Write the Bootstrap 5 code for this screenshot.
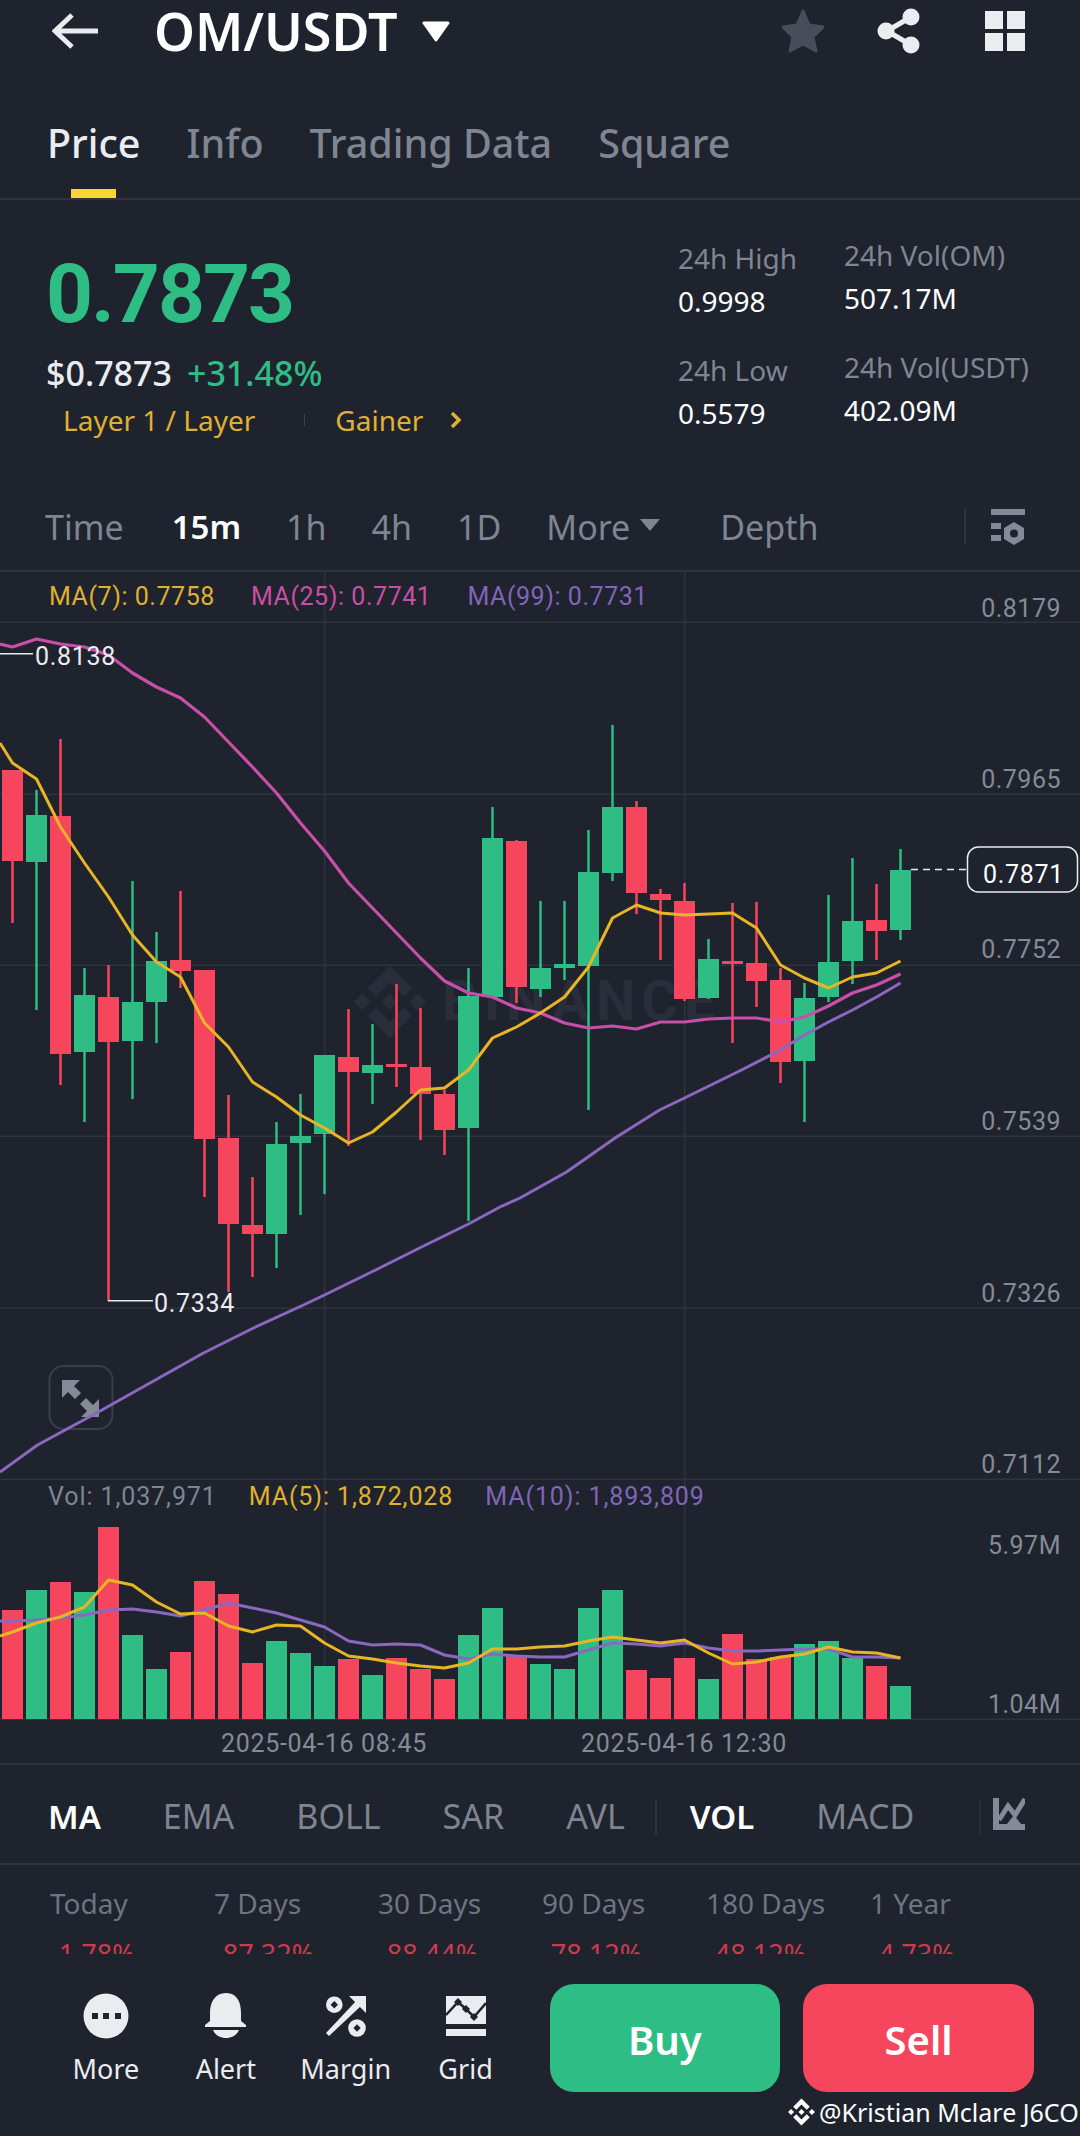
<!DOCTYPE html>
<html lang="en">
<head>
  <meta charset="UTF-8">
  <title>OM/USDT</title>
  <meta name="viewport" content="width=device-width, initial-scale=1">
  <link href="https://cdn.jsdelivr.net/npm/bootstrap@5.3.0/dist/css/bootstrap.min.css" rel="stylesheet">
  <style>
    :root {
      --bg: #1e232e;
      --line: #2e333e;
      --up: #2ebd85;
      --down: #f6465d;
      --gold: #e0b030;
      --pink: #c94fa6;
      --violet: #8264b8;
      --muted: #7f8591;
      --soft: #eaecef;
    }
    body {
      background: var(--bg);
      color: var(--soft);
      font-family: "Noto Sans", sans-serif;
      width: 1080px;
      height: 2136px;
      overflow: hidden;
      position: relative;
    }
    .top-bar { height: 62px; padding: 0 55px 0 52px; }
    .top-title { font-size: 52px; font-weight: 600; line-height: 60px; color: #fff; margin-left: 56px; }
    .ico-share { margin-left: 51px; }
    .ico-tiles { margin-left: 64px; }
    .tab-row { height: 138px; border-bottom: 2px solid var(--line); padding: 54px 0 0 47px; gap: 46px; position: relative; }
    .tab-item { font-size: 39.5px; line-height: 54px; color: var(--muted); font-weight: 500; }
    .tab-item.on { color: var(--soft); }
    .tab-mark { position: absolute; left: 71px; bottom: 0; width: 45px; height: 9px; background: #fcd535; }
    .stats { height: 280px; }
    .stats-left { width: 678px; padding: 50px 0 0 46px; }
    .big-price { font-family: Roboto, sans-serif; font-size: 82px; font-weight: 700; line-height: 88px; color: var(--up); letter-spacing: -2px; }
    .sub-price { font-size: 34px; font-weight: 500; line-height: 46px; margin-top: 12px; }
    .sub-price span { color: var(--up); margin-left: 15px; }
    .tags { font-size: 28px; line-height: 40px; color: var(--gold); padding-left: 17px; margin-top: 4px; }
    .tag-sep { width: 1px; height: 12px; background: #3a3f49; margin: 0 30px 0 49px; }
    .tag-arrow { margin-left: 27px; }
    .stat-col { width: 166px; padding-top: 39px; }
    .stat-col.shift { padding-top: 36px; }
    .stat-label { font-size: 28px; line-height: 38px; color: var(--muted); white-space: nowrap; }
    .stat-val { font-size: 28px; line-height: 38px; margin-top: 5px; margin-bottom: 31px; color: #fff; white-space: nowrap; }
    .time-row { height: 90px; padding: 4px 0 0 45px; gap: 45px; font-size: 34px; color: var(--muted); }
    .time-row .on { color: #fff; font-weight: 600; font-size: 33px; margin-left: 3px; }
    .tri { width: 22px; height: 14px; margin-left: 9px; margin-bottom: 4px; }
    .depth-item { margin-left: 14px; }
    .v-sep { width: 2px; height: 36px; background: var(--line); }
    .time-sep { margin-left: 101px; }
    .time-ico { margin-left: -21px; }
    .chart-wrap { position: relative; height: 1193px; border-top: 2px solid var(--line); }
    .chart-svg { display: block; position: absolute; left: 0; top: -2px; }
    .chart-legend { position: absolute; left: 49px; font-family: Roboto, sans-serif; font-size: 25px; line-height: 30px; white-space: nowrap; gap: 36px; letter-spacing: .55px; }
    .legend-top { top: 10px; }
    .legend-vol { top: 910px; left: 48px; gap: 32px; letter-spacing: .9px; }
    .ink-muted { color: var(--muted); }
    .ink-gold { color: var(--gold); }
    .ink-pink { color: var(--pink); }
    .ink-violet { color: var(--violet); }
    .ind-row { height: 102px; border-top: 2px solid var(--line); border-bottom: 2px solid var(--line); padding: 5px 0 0 48px; gap: 62px; font-size: 34px; color: var(--muted); font-weight: 400; }
    .ind-row .on { color: #fff; font-weight: 600; font-size: 33px; }
    .ind-sep-a { margin: 0 -29px 0 -32px; }
    .ind-sep-b { opacity: .6; margin-left: 3px; }
    .ind-ico { margin: -6px 0 0 -50px; }
    .perf { height: 89px; overflow: hidden; padding: 19px 0 0 50px; }
    .perf-col { width: 164px; }
    .perf-label { font-size: 28px; line-height: 38px; color: #6e7480; white-space: nowrap; }
    .perf-val { font-size: 27px; line-height: 36px; margin-top: 14px; color: #cf3a50; white-space: nowrap; }
    .bottom-bar { height: 182px; padding: 30px 46px 0 46px; }
    .act-item { width: 120px; font-size: 27px; line-height: 36px; color: var(--soft); text-align: center; padding-top: 9px; }
    .act-icon { height: 46px; margin-bottom: 12px; }
    .act-btn { width: 231px; height: 108px; border-radius: 24px; border: 0; color: #fff; font-size: 40px; font-weight: 600; padding: 3px 0 0; }
    .act-buy { background: var(--up); margin-left: 24px; margin-right: 23px; }
    .act-sell { background: var(--down); }
    .credit { position: absolute; left: 788px; top: 2095px; font-size: 25px; line-height: 34px; color: #fff; white-space: nowrap; gap: 4px; }
  </style>
</head>
<body>
  <div class="top-bar d-flex align-items-center">
    <svg width="46" height="36" viewBox="0 0 46 36"><path d="M20 2 3 18l17 16M3 18h43" fill="none" stroke="#eaecef" stroke-width="5"/></svg>
    <div class="top-title">OM/USDT</div>
    <svg class="ms-4" width="28" height="21" viewBox="0 0 28 21"><path d="M2 2h24L14 19z" fill="#fff" stroke="#fff" stroke-width="3" stroke-linejoin="round"/></svg>
    <div class="ms-auto d-flex align-items-center">
      <svg width="46" height="46" viewBox="0 0 46 46"><path d="M23 3l6 14 14 2-10 10 3 14-13-7-13 7 3-14L3 19l14-2z" fill="#474d59" stroke="#474d59" stroke-width="3" stroke-linejoin="round"/></svg>
      <svg class="ico-share" width="44" height="46" viewBox="0 0 44 46"><path d="M10 23 34 9M10 23l24 14" stroke="#eaecef" stroke-width="5"/><circle cx="34" cy="9" r="8.5" fill="#eaecef"/><circle cx="34" cy="37" r="8.5" fill="#eaecef"/><circle cx="9" cy="23" r="8.5" fill="#eaecef"/></svg>
      <svg class="ico-tiles" width="40" height="40" viewBox="0 0 40 40"><path d="M0 0h18v18H0zM22 0h18v18H22zM0 22h18v18H0zM22 22h18v18H22z" fill="#eaecef"/></svg>
    </div>
  </div>

  <div class="tab-row d-flex">
    <div class="tab-item on">Price</div>
    <div class="tab-item">Info</div>
    <div class="tab-item">Trading Data</div>
    <div class="tab-item">Square</div>
    <div class="tab-mark"></div>
  </div>

  <div class="stats d-flex">
    <div class="stats-left">
      <div class="big-price">0.7873</div>
      <div class="sub-price">$0.7873<span>+31.48%</span></div>
      <div class="tags d-flex align-items-center">
        <div>Layer 1 / Layer</div>
        <div class="tag-sep"></div>
        <div>Gainer</div>
        <svg class="tag-arrow" width="12" height="18" viewBox="0 0 12 18"><path d="M2 2l7 7-7 7" fill="none" stroke="#e0b030" stroke-width="3.5"/></svg>
      </div>
    </div>
    <div class="stat-col">
      <div class="stat-label">24h High</div>
      <div class="stat-val">0.9998</div>
      <div class="stat-label">24h Low</div>
      <div class="stat-val">0.5579</div>
    </div>
    <div class="stat-col shift">
      <div class="stat-label">24h Vol(OM)</div>
      <div class="stat-val">507.17M</div>
      <div class="stat-label">24h Vol(USDT)</div>
      <div class="stat-val">402.09M</div>
    </div>
  </div>

  <div class="time-row d-flex align-items-center">
    <div>Time</div>
    <div class="on">15m</div>
    <div>1h</div>
    <div>4h</div>
    <div>1D</div>
    <div class="d-flex align-items-center">More<svg class="tri" viewBox="0 0 22 14"><path d="M1 1h20L11 13z" fill="#7f8591"/></svg></div>
    <div class="depth-item">Depth</div>
    <div class="v-sep time-sep"></div>
    <svg class="time-ico" width="36" height="36" viewBox="0 0 36 36"><path d="M1 0h34v6H1zM1 14h10v6H1zM1 26h10v6H1z" fill="#848a97"/><path d="M24 13l10 6v11l-10 6-10-6V19z" fill="#848a97"/><circle cx="24" cy="24.500" r="4" fill="#1e232e"/></svg>
  </div>

  <div class="chart-wrap">
    <svg class="chart-svg" id="chart" width="1080" height="1195" viewBox="0 570 1080 1195"></svg>
    <div class="chart-legend legend-top d-flex">
      <span class="ink-gold">MA(7): 0.7758</span>
      <span class="ink-pink">MA(25): 0.7741</span>
      <span class="ink-violet">MA(99): 0.7731</span>
    </div>
    <div class="chart-legend legend-vol d-flex">
      <span class="ink-muted">Vol: 1,037,971</span>
      <span class="ink-gold">MA(5): 1,872,028</span>
      <span class="ink-violet">MA(10): 1,893,809</span>
    </div>
  </div>

  <div class="ind-row d-flex align-items-center">
    <div class="on">MA</div>
    <div>EMA</div>
    <div>BOLL</div>
    <div>SAR</div>
    <div>AVL</div>
    <div class="v-sep ind-sep-a"></div>
    <div class="on">VOL</div>
    <div>MACD</div>
    <div class="v-sep ind-sep-b"></div>
    <svg class="ind-ico" width="32" height="32" viewBox="0 0 32 32"><path d="M0 0h6v26h26v6H0z" fill="#848a97"/><path d="M6 22 15 8l7 9 10-16" fill="none" stroke="#848a97" stroke-width="5"/><path d="M14 26l7-9 7 9z" fill="#848a97"/></svg>
  </div>

  <div class="perf d-flex">
    <div class="perf-col"><div class="perf-label">Today</div><div class="perf-val">-1.78%</div></div>
    <div class="perf-col"><div class="perf-label">7 Days</div><div class="perf-val">-87.32%</div></div>
    <div class="perf-col"><div class="perf-label">30 Days</div><div class="perf-val">-88.44%</div></div>
    <div class="perf-col"><div class="perf-label">90 Days</div><div class="perf-val">-78.12%</div></div>
    <div class="perf-col"><div class="perf-label">180 Days</div><div class="perf-val">-48.12%</div></div>
    <div class="perf-col"><div class="perf-label">1 Year</div><div class="perf-val">-4.73%</div></div>
  </div>

  <div class="bottom-bar d-flex align-items-start">
    <div class="act-item">
      <svg class="act-icon" width="46" height="46" viewBox="0 0 46 46"><circle cx="23" cy="23" r="22.500" fill="#eaecef"/><path d="M9 20h6v6H9zM20 20h6v6h-6zM32 20h6v6h-6z" fill="#1e232e"/></svg>
      <div>More</div>
    </div>
    <div class="act-item">
      <svg class="act-icon" width="42" height="46" viewBox="0 0 42 46"><path d="M21 0C32 0 36 9 36 20v8l5 4v2H0v-2l5-4v-8C5 9 10 0 21 0z" fill="#eaecef"/><path d="M8 37h26c-2 5-7 8-13 8S10 42 8 37z" fill="#eaecef"/></svg>
      <div>Alert</div>
    </div>
    <div class="act-item">
      <svg class="act-icon" width="40" height="46" viewBox="0 -3 40 46"><path d="M23 0h17v17zM3 40l-3-3L31 4l5 5z" fill="#eaecef"/><circle cx="8.300" cy="8.700" r="8.300" fill="#eaecef"/><circle cx="31" cy="32" r="8.800" fill="#eaecef"/><path d="M8.300 5l3.700 3.700-3.700 3.700-3.700-3.700zM31 28.300l3.700 3.700-3.700 3.700-3.700-3.700z" fill="#1e232e"/></svg>
      <div>Margin</div>
    </div>
    <div class="act-item">
      <svg class="act-icon" width="40" height="46" viewBox="0 -3 40 46"><path d="M0 0h40v28H0zM0 33h40v7H0z" fill="#eaecef"/><path d="M0 19 12 6l8 7 8 8 12-14" fill="none" stroke="#1e232e" stroke-width="2.500"/><path d="M12 2l4 4-4 4-4-4zM20 9l4 4-4 4-4-4zM28 17l4 4-4 4-4-4z" fill="#1e232e"/></svg>
      <div>Grid</div>
    </div>
    <button class="act-btn act-buy btn">Buy</button>
    <button class="act-btn act-sell btn">Sell</button>
  </div>

  <div class="credit d-flex align-items-center">
    <svg width="27" height="28" viewBox="0 0 24 24"><path fill="#fff" d="M16.624 13.92l2.717 2.716-7.353 7.353-7.353-7.352 2.717-2.717 4.636 4.66 4.636-4.66zm4.637-4.636L24 12l-2.715 2.716L18.568 12l2.693-2.716zm-9.272.001l2.716 2.691-2.716 2.718L9.272 12l2.716-2.715zm-9.272-.001L5.409 12l-2.692 2.692L0 12l2.716-2.716zM11.989.012l7.353 7.329-2.717 2.715-4.636-4.636-4.636 4.66-2.717-2.715 7.353-7.353z"/></svg>
    <div>@Kristian Mclare J6CO</div>
  </div>

  <script>
    // candle data in page pixels: up?, wick top, body top, body bottom, wick bottom
    var candles = [
      [0,770,770,861,923],[1,790,815,862,1010],[0,739,816,1054,1085],[1,968,995,1052,1122],[0,965,997,1042,1301],
      [1,881,1002,1041,1099],[1,932,961,1002,1043],[0,891,960,971,988],[0,970,970,1139,1197],[0,1095,1138,1224,1292],
      [0,1177,1225,1234,1277],[1,1122,1144,1234,1268],[1,1094,1136,1143,1215],[1,1055,1055,1134,1194],[0,1009,1057,1072,1146],
      [1,1024,1065,1073,1104],[0,984,1064,1067,1087],[0,1008,1067,1094,1140],[0,1090,1094,1130,1155],[1,968,996,1128,1221],
      [1,807,838,997,997],[0,840,841,987,1003],[1,901,968,989,997],[1,901,964,968,980],[1,830,872,966,1110],
      [1,725,807,873,881],[0,801,807,893,914],[0,889,894,900,960],[0,883,901,999,1001],[1,939,959,998,999],
      [0,903,961,964,1043],[0,902,963,981,1007],[0,968,980,1062,1083],[1,983,998,1061,1122],[1,895,962,997,1002],
      [1,858,921,961,984],[0,884,920,931,960],[1,849,870,930,940]
    ];
    // volume bars: top edge in page pixels, same colour order as candles
    var volTop = [1610,1590,1582,1592,1527,1635,1669,1652,1581,1594,1663,1641,1653,1666,1659,1675,1658,1669,1679,1635,1608,1655,1664,1669,1608,1590,1670,1678,1658,1679,1634,1659,1657,1644,1641,1658,1666,1686];
    var ma25 = [0,644,12.5,647,36.5,639,60.5,644,84.500,647,108.500,655,132.500,673,156.500,687,180.500,698,204.500,717,228.500,742,252.500,767,276.500,793,300.500,823,324.500,851,348.500,883,372.500,908,396.500,933,420.500,958,444.500,981,468.500,993,492.500,997,516.500,1008,540.500,1013,564.500,1023,588.500,1028,612.500,1026,636.500,1029,660.500,1022,684.500,1022,708.500,1019,732.500,1018,756.500,1018,780.500,1022,804.500,1017,828.500,1006,852.500,993,876.500,985,900.500,974];
    var ma7 = [0,743,12.5,763,36.5,779,60.5,827,84.500,863,108.500,897,132.500,935,156.500,962,180.500,977,204.500,1023,228.500,1047,252.500,1082,276.500,1097,300.500,1115,324.500,1128,348.500,1143,372.500,1132,396.500,1112,420.500,1090,444.500,1088,468.500,1070,492.500,1038,516.500,1027,540.500,1013,564.500,997,588.500,967,612.500,918,636.500,905,660.500,913,684.500,915,708.500,914,732.500,913,756.500,928,780.500,965,804.500,978,828.500,988,852.500,977,876.500,973,900.500,961];
    var ma99 = [0,1472,37.5,1445,96.5,1413,178.500,1367,203.500,1353,253.500,1328,303.500,1305,324.500,1295,371.500,1272,421.500,1247,468.500,1224,500,1207,520,1198,566.500,1172,616.500,1137,659.500,1110,684.500,1098,741.500,1070,780.500,1050,804.500,1035,828.500,1022,852.500,1010,876.500,997,900.500,983];
    var vol5 = [0,1636,12.5,1632,36.5,1623,60.5,1617,84.500,1607,108.500,1580,132.500,1585,156.500,1602,180.500,1614,204.500,1613,228.500,1626,252.500,1632,276.500,1625,300.500,1626,324.500,1643,348.500,1656,372.500,1659,396.500,1663,420.500,1666,444.500,1668,468.500,1663,492.500,1649,516.500,1649,540.500,1647,564.500,1646,588.500,1641,612.500,1637,636.500,1640,660.500,1643,684.500,1640,708.500,1653,732.500,1664,756.500,1662,780.500,1657,804.500,1654,828.500,1647,852.500,1652,876.500,1653,900.500,1658];
    var vol10 = [0,1621,12.5,1621,36.5,1620,60.5,1618,84.500,1615,108.500,1610,132.500,1609,156.500,1612,180.500,1616,204.500,1610,228.500,1603,252.500,1608,276.500,1613,300.500,1620,324.500,1627,348.500,1641,372.500,1645,396.500,1644,420.500,1645,444.500,1655,468.500,1659,492.500,1654,516.500,1656,540.500,1657,564.500,1657,588.500,1650,612.500,1643,636.500,1644,660.500,1646,684.500,1643,708.500,1648,732.500,1651,756.500,1651,780.500,1650,804.500,1649,828.500,1649,852.500,1657,876.500,1657,900.500,1658];

    var logo = 'M16.624 13.92l2.717 2.716-7.353 7.353-7.353-7.352 2.717-2.717 4.636 4.66 4.636-4.66zm4.637-4.636L24 12l-2.715 2.716L18.568 12l2.693-2.716zm-9.272.001l2.716 2.691-2.716 2.718L9.272 12l2.716-2.715zm-9.272-.001L5.409 12l-2.692 2.692L0 12l2.716-2.716zM11.989.012l7.353 7.329-2.717 2.715-4.636-4.636-4.636 4.66-2.717-2.715 7.353-7.353z';
    var grid = '#2e333e', green = '#2ebd85', red = '#f6465d', out = '';

    function rect(x, y, w, h, fill) {
      out += '<rect x="' + x + '" y="' + y + '" width="' + w + '" height="' + h + '" fill="' + fill + '"/>';
    }
    function line(pts, color, w) {
      var p = '';
      for (var i = 0; i < pts.length; i += 2) p += pts[i] + ',' + pts[i + 1] + ' ';
      out += '<polyline points="' + p + '" fill="none" stroke="' + color + '" stroke-width="' + w + '" stroke-linejoin="round"/>';
    }
    function label(x, y, text, color) {
      out += '<text x="' + x + '" y="' + y + '" fill="' + color + '" font-family="Roboto, sans-serif" font-size="25" letter-spacing=".7">' + text + '</text>';
    }

    [622, 794, 965, 1136, 1308, 1479, 1719].forEach(function (y) { rect(0, y - .5, 1080, 1.5, grid); });
    [324, 684].forEach(function (x) { rect(x, 572, 1.5, 1147, grid); });

    // faint exchange watermark behind the candles
    out += '<g transform="translate(354 966) scale(3)"><path d="' + logo + '" fill="#292e3a"/></g>';
    out += '<text x="442" y="1020" fill="#292e3a" font-family="Roboto, sans-serif" font-weight="700" font-size="56" letter-spacing="6">BINANCE</text>';

    // expand button
    out += '<rect x="49.500" y="1366" width="63" height="63" rx="14" fill="none" stroke="#393e49" stroke-width="2"/>';
    out += '<path d="M62 1380h18l-6 6 7 7-6 6-7-7-6 6zM99 1417H81l6-6-7-7 6-6 7 7 6-6z" fill="#858b96"/>';

    candles.forEach(function (c, i) {
      var cx = 12.5 + 24 * i, col = c[0] ? green : red;
      rect(cx - 1.25, c[1], 2.5, c[4] - c[1], col);
      rect(cx - 10.5, c[2], 21, Math.max(c[3] - c[2], 3), col);
      rect(cx - 10.5, volTop[i], 21, 1719 - volTop[i], col);
    });

    line(ma99, '#8a68c0', 3);
    line(ma25, '#c94fa8', 3.2);
    line(ma7, '#e8b525', 3);
    line(vol10, '#8a68c0', 3);
    line(vol5, '#e8b525', 3);

    // axis labels
    [[617, '0.8179'], [788, '0.7965'], [958, '0.7752'], [1130, '0.7539'], [1302, '0.7326'], [1473, '0.7112'], [1554, '5.97M'], [1713, '1.04M']].forEach(function (a) {
      out += '<text x="1061" y="' + a[0] + '" text-anchor="end" fill="#858b96" font-family="Roboto, sans-serif" font-size="25" letter-spacing=".5">' + a[1] + '</text>';
    });
    label(221, 1752, '2025-04-16 08:45', '#858b96');
    label(581, 1752, '2025-04-16 12:30', '#858b96');

    // high / low markers
    rect(0, 653, 33, 1.5, '#eaecef');
    label(35, 665, '0.8138', '#eaecef');
    rect(108, 1300, 45, 1.5, '#eaecef');
    label(154, 1312, '0.7334', '#eaecef');

    // last price tag
    out += '<path d="M911 869.500H966" stroke="#eaecef" stroke-width="1.500" stroke-dasharray="7 5"/>';
    out += '<rect x="967.500" y="847" width="110" height="45" rx="11" fill="#1e232e" stroke="#eaecef" stroke-width="1.500"/>';
    label(983, 883, '0.7871', '#fff');

    document.getElementById('chart').innerHTML = out;
  </script>
  <script src="https://cdn.jsdelivr.net/npm/bootstrap@5.3.0/dist/js/bootstrap.bundle.min.js"></script>
</body>
</html>
